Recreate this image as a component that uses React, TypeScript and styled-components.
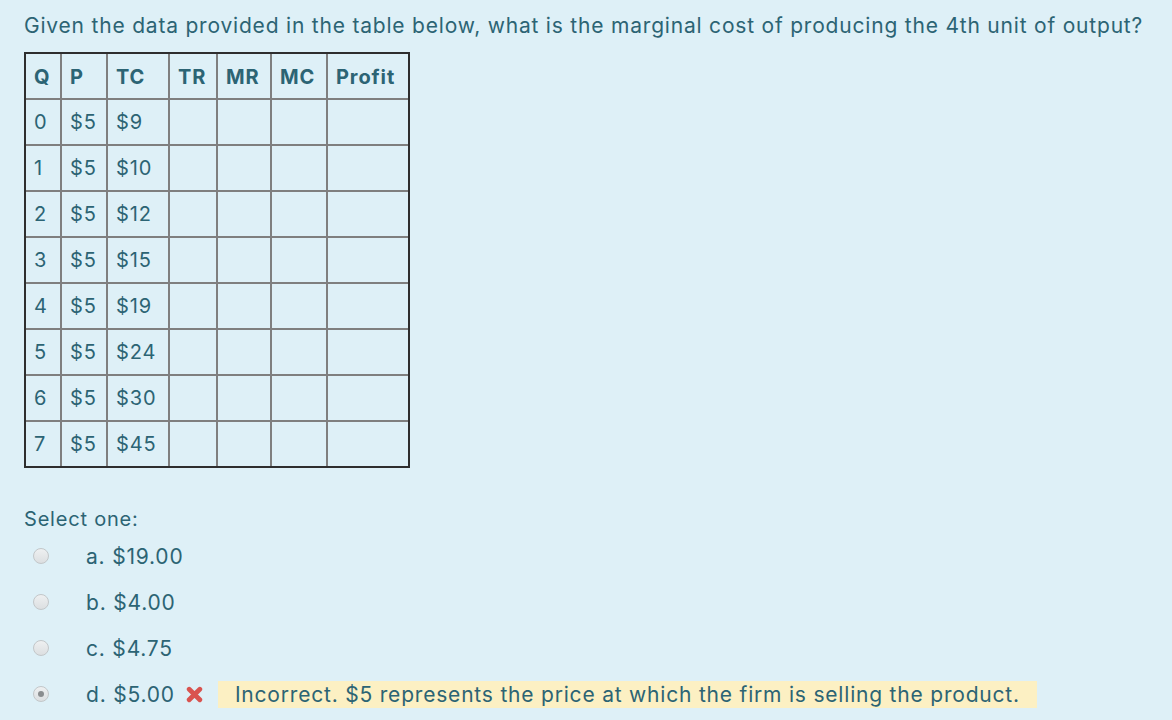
import styled, { createGlobalStyle } from "styled-components";

const GlobalStyle = createGlobalStyle`
    html, body {
        margin: 0;
        padding: 0;
        background: #def0f7;
    }
    body {
        font-family: Inter, "Noto Sans", sans-serif;
        color: #2c6474;
        letter-spacing: 0.8px;
    }
`;

const Page = styled.div`
    width: 1172px;
    height: 720px;
    padding: 11px 24px 0;
    box-sizing: border-box;
    overflow: hidden;
`;

const Question = styled.p`
    margin: 0 0 11px;
    font-size: 21px;
    line-height: 30px;
    white-space: nowrap;
`;

const DataTable = styled.table`
    border-collapse: separate;
    border-spacing: 0;
    border: 2px solid #2e2e2e;
    font-size: 20px;
    letter-spacing: 0.9px;

    td {
        height: 44px;
        padding: 0 8px;
        box-sizing: content-box;
        text-align: left;
        vertical-align: middle;
        border-left: 2px solid #7f7f7f;
        border-top: 2px solid #7f7f7f;
    }
    td:first-child {
        border-left: 0;
    }
`;

const HeadCell = styled.th<{ $w: number }>`
    width: ${(props) => props.$w - 16}px;
    height: 43px;
    padding: 1px 8px 0;
    box-sizing: content-box;
    text-align: left;
    vertical-align: middle;
    font-weight: 700;
    border-left: 2px solid #7f7f7f;

    &:first-child {
        border-left: 0;
    }
`;

const SelectLabel = styled.div`
    margin-top: 37px;
    font-size: 20px;
    line-height: 28px;
`;

const Options = styled.div`
    display: flex;
    flex-direction: column;
`;

const Option = styled.div`
    display: flex;
    align-items: center;
    height: 46px;
    font-size: 21px;
`;

const Radio = styled.span<{ $checked?: boolean }>`
    position: relative;
    width: 16px;
    height: 16px;
    margin-left: 9px;
    margin-right: 37px;
    border-radius: 50%;
    border: 1px solid #c3c7c9;
    background: linear-gradient(#eef0f1, #dcdfe1);
    box-sizing: border-box;
    flex-shrink: 0;

    &::after {
        content: "";
        display: ${(props) => (props.$checked ? "block" : "none")};
        position: absolute;
        left: 4px;
        top: 4px;
        width: 6px;
        height: 6px;
        border-radius: 50%;
        background: #8a8d8f;
    }
`;

const WrongMark = styled.svg`
    margin-left: 11px;
    margin-right: 15px;
    flex-shrink: 0;
`;

const Feedback = styled.span`
    background: #fcf0c3;
    padding: 1px 17px;
    line-height: 25px;
    white-space: nowrap;
`;

const widths = [34, 44, 60, 46, 52, 54, 80];
const headers = ["Q", "P", "TC", "TR", "MR", "MC", "Profit"];
const costs = [9, 10, 12, 15, 19, 24, 30, 45];

const options = [
    { label: "a. $19.00" },
    { label: "b. $4.00" },
    { label: "c. $4.75" },
    { label: "d. $5.00", checked: true },
];

const App = () => {
    return (
        <Page>
            <GlobalStyle />
            <Question>
                Given the data provided in the table below, what is the marginal cost of
                producing the 4th unit of output?
            </Question>
            <DataTable>
                <thead>
                    <tr>
                        {headers.map((h, i) => (
                            <HeadCell key={h} $w={widths[i]}>
                                {h}
                            </HeadCell>
                        ))}
                    </tr>
                </thead>
                <tbody>
                    {costs.map((tc, q) => (
                        <tr key={q}>
                            <td>{q}</td>
                            <td>$5</td>
                            <td>${tc}</td>
                            <td></td>
                            <td></td>
                            <td></td>
                            <td></td>
                        </tr>
                    ))}
                </tbody>
            </DataTable>
            <SelectLabel>Select one:</SelectLabel>
            <Options>
                {options.map((o) => (
                    <Option key={o.label}>
                        <Radio $checked={o.checked} />
                        <span>{o.label}</span>
                        {o.checked && (
                            <>
                                <WrongMark width="17" height="17" viewBox="0 0 16 16">
                                    <path
                                        d="M3 3 L13 13 M13 3 L3 13"
                                        stroke="#d9534f"
                                        strokeWidth="4.5"
                                        strokeLinecap="round"
                                    />
                                </WrongMark>
                                <Feedback>
                                    Incorrect. $5 represents the price at which the firm is
                                    selling the product.
                                </Feedback>
                            </>
                        )}
                    </Option>
                ))}
            </Options>
        </Page>
    );
};

export default App;
